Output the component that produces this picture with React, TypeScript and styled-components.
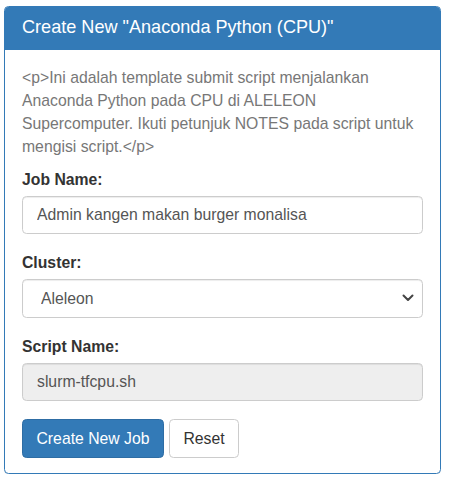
import React, { useState } from "react";
import styled, { createGlobalStyle } from "styled-components";

const GlobalStyle = createGlobalStyle`
  * { box-sizing: border-box; }
  body {
    margin: 0;
    background: #ffffff;
    font-family: "Liberation Sans", Arial, Helvetica, sans-serif;
    font-size: 15.75px;
    line-height: 1.43;
    color: #333333;
  }
`;

const Page = styled.div`
  padding: 6px 9px 0 4px;
`;

const Panel = styled.div`
  width: 437px;
  border: 1px solid #337ab7;
  border-radius: 4.5px;
  background: #ffffff;
  box-shadow: 0 1px 1px rgba(0, 0, 0, 0.05);
  overflow: hidden;
`;

const PanelHeading = styled.div`
  background: #337ab7;
  color: #ffffff;
  padding: 11px 17px;
  border-bottom: 1px solid #337ab7;
`;

const PanelTitle = styled.h3`
  margin: 0;
  font-size: 18.1px;
  font-weight: 400;
  line-height: 1.1;
`;

const PanelBody = styled.form`
  padding: 16px 17px 15px;
`;

const Intro = styled.p`
  margin: 0 0 10px;
  color: #777777;
  line-height: 23px;
`;

const FormGroup = styled.div`
  margin-bottom: 17px;
`;

const Label = styled.label`
  display: block;
  margin-bottom: 5px;
  font-weight: 700;
  line-height: 23px;
`;

const TextInput = styled.input<{ $readOnly?: boolean }>`
  display: block;
  width: 100%;
  height: 38.5px;
  padding: 6px 14px;
  font-family: inherit;
  font-size: 15.75px;
  color: #555555;
  background: ${({ $readOnly }) => ($readOnly ? "#eeeeee" : "#ffffff")};
  border: 1px solid #cccccc;
  border-radius: 4.5px;
  box-shadow: inset 0 1px 1px rgba(0, 0, 0, 0.075);
  outline: none;
`;

const SelectWrap = styled.div`
  position: relative;
`;

const Select = styled.select`
  display: block;
  width: 100%;
  height: 38.5px;
  padding: 6px 14px 6px 18px;
  font-family: inherit;
  font-size: 15.75px;
  color: #555555;
  background: #ffffff;
  border: 1px solid #cccccc;
  border-radius: 4.5px;
  box-shadow: inset 0 1px 1px rgba(0, 0, 0, 0.075);
  appearance: none;
  outline: none;
`;

const Chevron = styled.svg`
  position: absolute;
  right: 9px;
  top: 15px;
  pointer-events: none;
`;

const Actions = styled.div`
  display: flex;
  gap: 5px;
  padding-top: 1px;
`;

const Button = styled.button<{ $primary?: boolean }>`
  height: 38.5px;
  padding: 6px 13.5px;
  font-family: inherit;
  font-size: 15.75px;
  border-radius: 4.5px;
  border: 1px solid ${({ $primary }) => ($primary ? "#2e6da4" : "#cccccc")};
  background: ${({ $primary }) => ($primary ? "#337ab7" : "#ffffff")};
  color: ${({ $primary }) => ($primary ? "#ffffff" : "#333333")};
  cursor: pointer;
`;

export default function App() {
  const [jobName, setJobName] = useState("Admin kangen makan burger monalisa");
  const [cluster, setCluster] = useState("aleleon");

  return (
    <>
      <GlobalStyle />
      <Page>
        <Panel>
          <PanelHeading>
            <PanelTitle>Create New "Anaconda Python (CPU)"</PanelTitle>
          </PanelHeading>
          <PanelBody onSubmit={(e) => e.preventDefault()}>
            <Intro>
              &lt;p&gt;Ini adalah template submit script menjalankan Anaconda
              Python pada CPU di ALELEON Supercomputer. Ikuti petunjuk NOTES
              pada script untuk mengisi script.&lt;/p&gt;
            </Intro>
            <FormGroup>
              <Label htmlFor="job-name">Job Name:</Label>
              <TextInput
                id="job-name"
                value={jobName}
                onChange={(e) => setJobName(e.target.value)}
              />
            </FormGroup>
            <FormGroup>
              <Label htmlFor="cluster">Cluster:</Label>
              <SelectWrap>
                <Select
                  id="cluster"
                  value={cluster}
                  onChange={(e) => setCluster(e.target.value)}
                >
                  <option value="aleleon">Aleleon</option>
                </Select>
                <Chevron width="12" height="8" viewBox="0 0 12 8">
                  <path
                    d="M1.5 1.5 L6 6 L10.5 1.5"
                    fill="none"
                    stroke="#444"
                    strokeWidth="2"
                    strokeLinecap="round"
                    strokeLinejoin="round"
                  />
                </Chevron>
              </SelectWrap>
            </FormGroup>
            <FormGroup>
              <Label htmlFor="script-name">Script Name:</Label>
              <TextInput id="script-name" $readOnly readOnly value="slurm-tfcpu.sh" />
            </FormGroup>
            <Actions>
              <Button $primary type="submit">Create New Job</Button>
              <Button type="reset">Reset</Button>
            </Actions>
          </PanelBody>
        </Panel>
      </Page>
    </>
  );
}
